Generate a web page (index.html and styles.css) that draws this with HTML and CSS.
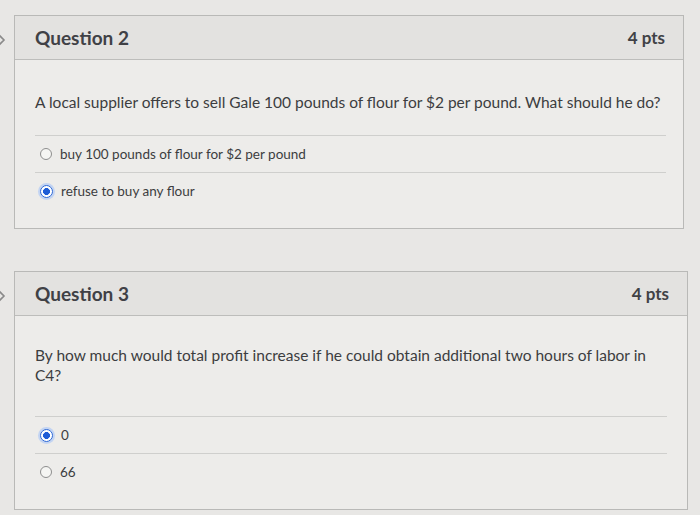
FILE: index.html
```html
<!DOCTYPE html>
<html>
<head>
<meta charset="utf-8">
<link rel="stylesheet" href="styles.css">
</head>
<body>
<div class="page">
  <div class="quiz-row">
    <svg class="chev" width="8" height="14" viewBox="0 0 8 14"><path d="M0 1 L6 7 L0 13" fill="none" stroke="#8a8a8a" stroke-width="1.6"/></svg>
    <section class="card card-a">
      <header class="card-head">
        <h2 class="q-title">Question 2</h2>
        <span class="q-pts">4 pts</span>
      </header>
      <div class="card-body">
        <p class="q-text">A local supplier offers to sell Gale 100 pounds of flour for $2 per pound. What should he do?</p>
        <ul class="answers">
          <li class="answer"><span class="radio"></span><span class="a-text">buy 100 pounds of flour for $2 per pound</span></li>
          <li class="answer"><span class="radio on"></span><span class="a-text">refuse to buy any flour</span></li>
        </ul>
      </div>
    </section>
  </div>
  <div class="quiz-row">
    <svg class="chev" width="8" height="14" viewBox="0 0 8 14"><path d="M0 1 L6 7 L0 13" fill="none" stroke="#8a8a8a" stroke-width="1.6"/></svg>
    <section class="card card-b">
      <header class="card-head">
        <h2 class="q-title">Question 3</h2>
        <span class="q-pts">4 pts</span>
      </header>
      <div class="card-body">
        <p class="q-text">By how much would total profit increase if he could obtain additional two hours of labor in C4?</p>
        <ul class="answers">
          <li class="answer"><span class="radio on"></span><span class="a-text">0</span></li>
          <li class="answer"><span class="radio"></span><span class="a-text">66</span></li>
        </ul>
      </div>
    </section>
  </div>
</div>
</body>
</html>
```
FILE: styles.css
```css
html, body {
  margin: 0;
  padding: 0;
}
body {
  background: #e8e7e5;
  font-family: Lato, "Open Sans", sans-serif;
  color: #3c3d40;
  width: 700px;
  height: 515px;
  overflow: hidden;
}
.page {
  padding-top: 15px;
  display: flex;
  flex-direction: column;
  gap: 42px;
}
.quiz-row {
  position: relative;
  padding-left: 14px;
}
.chev {
  position: absolute;
  left: -2px;
  top: 18px;
}
.card {
  border: 1px solid #b9b9b7;
  background: #edecea;
  box-sizing: border-box;
}
.card-a { width: 670px; }
.card-b { width: 674px; }
.card-head {
  height: 44px;
  box-sizing: border-box;
  background: #e3e2e0;
  border-bottom: 1px solid #bdbdbb;
  display: flex;
  align-items: center;
  justify-content: space-between;
  padding: 0 18px 0 20px;
}
.q-title {
  margin: 0;
  font-size: 19px;
  font-weight: 700;
  color: #404146;
}
.q-pts {
  font-size: 17px;
  font-weight: 700;
  color: #404146;
}
.card-body {
  padding: 32px 17px 19px 20px;
}
.card-b .card-body {
  padding-top: 29px;
  padding-right: 20px;
}
.q-text {
  margin: 0 0 23px;
  font-size: 15.5px;
  line-height: 20px;
}
.card-b .q-text {
  margin-bottom: 31px;
}
.answers {
  list-style: none;
  margin: 0;
  padding: 0;
}
.answer {
  height: 37px;
  border-top: 1px solid #cfcfcd;
  box-sizing: border-box;
  display: flex;
  align-items: center;
  padding-left: 5px;
  gap: 8px;
  font-size: 13.5px;
}
.radio {
  width: 12px;
  height: 12px;
  border-radius: 50%;
  border: 1px solid #8e8e8e;
  background: #f5f5f3;
  box-sizing: border-box;
  flex: none;
}
.radio.on {
  width: 13px;
  height: 13px;
  border: 1.5px solid #2a66d8;
  background: radial-gradient(circle, #1f5dd6 0 3.2px, #ffffff 3.7px);
  box-shadow: 0 0 0 2px #c3d4f2;
}
```
